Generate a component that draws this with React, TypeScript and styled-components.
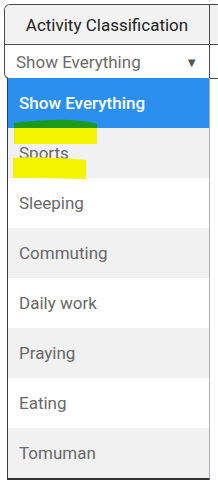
import React from "react";
import styled, { createGlobalStyle } from "styled-components";

const GlobalStyle = createGlobalStyle`
  html, body {
    margin: 0;
    padding: 0;
    background: #ffffff;
    font-family: Roboto, "Noto Sans", Arial, sans-serif;
    overflow: hidden;
  }
`;

const Page = styled.div`
  position: relative;
  width: 218px;
  height: 497px;
  padding: 4px 0 0 4px;
  box-sizing: border-box;
  overflow: hidden;
`;

const Grid = styled.div`
  display: grid;
  grid-template-columns: 205px 1fr;
  grid-template-rows: 40px 33px;
  border: 1px solid #4a4a4a;
  border-right: none;
  border-radius: 6px 0 0 6px;
  overflow: hidden;
`;

const HeaderCell = styled.div<{ $last?: boolean }>`
  display: flex;
  align-items: center;
  justify-content: center;
  background: #f2f2f2;
  border-bottom: 1px solid #4a4a4a;
  border-right: ${(p) => (p.$last ? "none" : "1px solid #4a4a4a")};
  font-size: 17px;
  color: #222;
`;

const FilterCell = styled.div<{ $last?: boolean }>`
  display: flex;
  align-items: center;
  justify-content: space-between;
  padding: 0 11px 0 11px;
  background: #fff;
  border-right: ${(p) => (p.$last ? "none" : "1px solid #4a4a4a")};
  font-size: 17px;
  color: #6b6b6b;
`;

const Caret = styled.span`
  font-size: 13px;
  color: #555;
  margin-top: 2px;
`;

const Menu = styled.ul`
  position: absolute;
  left: 7px;
  top: 78px;
  width: 201px;
  margin: 0;
  padding: 0;
  list-style: none;
  border-left: 1px solid #3a3a3a;
  border-right: 1px solid #9fb0c4;
  border-bottom: 2px solid #333;
  box-sizing: content-box;
`;

const Item = styled.li<{ $active?: boolean; $shade?: boolean }>`
  height: 50px;
  display: flex;
  align-items: center;
  padding-left: 11px;
  font-size: 17px;
  font-weight: ${(p) => (p.$active ? 500 : 400)};
  color: ${(p) => (p.$active ? "#ffffff" : "#686868")};
  background: ${(p) =>
    p.$active ? "#2b8ff0" : p.$shade ? "#f1f1f1" : "#ffffff"};
`;

const Marks = styled.svg`
  position: absolute;
  left: 0;
  top: 0;
  pointer-events: none;
`;

const options = [
  "Show Everything",
  "Sports",
  "Sleeping",
  "Commuting",
  "Daily work",
  "Praying",
  "Eating",
  "Tomuman",
];

const App: React.FC = () => {
  return (
    <>
      <GlobalStyle />
      <Page>
        <Grid>
          <HeaderCell>Activity Classification</HeaderCell>
          <HeaderCell $last />
          <FilterCell>
            Show Everything
            <Caret>▼</Caret>
          </FilterCell>
          <FilterCell $last />
        </Grid>
        <Menu>
          {options.map((o, i) => (
            <Item key={o} $active={i === 0} $shade={i % 2 === 1}>
              {o}
            </Item>
          ))}
        </Menu>
        <Marks width="218" height="497">
          <path
            d="M14 128 L14 123 Q50 119 70 120 Q90 121 97 124 L97 128 Z"
            fill="#1b9a1b"
          />
          <rect x="14" y="128" width="83" height="16" fill="#f4f400" />
          <path
            d="M13 158 Q40 156 86 160 L86 179 Q50 178 13 178 Z"
            fill="#f4f400"
          />
        </Marks>
      </Page>
    </>
  );
};

export default App;
